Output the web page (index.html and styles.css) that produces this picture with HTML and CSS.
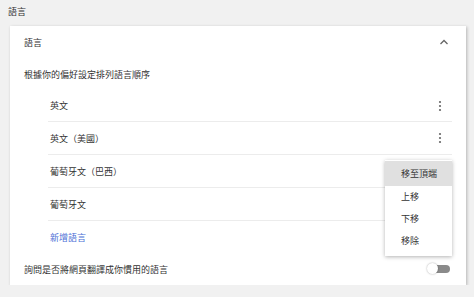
FILE: index.html
```html
<!DOCTYPE html>
<html lang="zh-Hant">
<head>
  <meta charset="UTF-8" />
  <meta name="viewport" content="width=device-width, initial-scale=1.0" />
  <title>語言</title>
  <link rel="stylesheet" href="styles.css">
</head>

<body>
  <div class="page-title">語言</div>

  <div class="card">
    <div class="card-header">
      <span>語言</span>
      <svg class="chevron" viewBox="0 0 10 6" width="10" height="6">
        <path d="M1.5 5 L5 1.5 L8.5 5" fill="none" stroke="#666" stroke-width="1.3"></path>
      </svg>
    </div>

    <div class="row">根據你的偏好設定排列語言順序</div>

    <ul class="lang-list">
      <li class="lang-item">
        <span>英文</span>
        <svg class="dots" viewBox="0 0 4 12" width="4" height="12">
          <circle cx="2" cy="2" r="1.1" fill="#666"></circle>
          <circle cx="2" cy="6" r="1.1" fill="#666"></circle>
          <circle cx="2" cy="10" r="1.1" fill="#666"></circle>
        </svg>
      </li>
      <li class="lang-item">
        <span>英文（美國）</span>
        <svg class="dots" viewBox="0 0 4 12" width="4" height="12">
          <circle cx="2" cy="2" r="1.1" fill="#666"></circle>
          <circle cx="2" cy="6" r="1.1" fill="#666"></circle>
          <circle cx="2" cy="10" r="1.1" fill="#666"></circle>
        </svg>
      </li>
      <li class="lang-item">
        <span>葡萄牙文（巴西）</span>
      </li>
      <li class="lang-item">
        <span>葡萄牙文</span>
      </li>
      <li class="lang-item add-lang">新增語言</li>
    </ul>

    <div class="row toggle-row">
      <span>詢問是否將網頁翻譯成你慣用的語言</span>
      <div class="toggle"><div class="knob"></div></div>
    </div>

    <div class="menu">
      <div class="menu-item active">移至頂端</div>
      <div class="menu-item">上移</div>
      <div class="menu-item">下移</div>
      <div class="menu-item">移除</div>
    </div>
  </div>
</body>
</html>
```

FILE: styles.css
```css
* {
  margin: 0;
  padding: 0;
  box-sizing: border-box;
}

body {
  font-family: "Noto Sans CJK TC", "Noto Sans", sans-serif;
  font-size: 9px;
  color: #333;
  background-color: #f1f1f1;
}

.page-title {
  height: 26px;
  line-height: 24px;
  padding-left: 8px;
}

.card {
  position: relative;
  margin: 0 8px 0 10px;
  background-color: #fff;
  box-shadow: 1px 1px 3px rgba(0, 0, 0, 0.25);
}

.card-header,
.row {
  height: 32px;
  padding: 0 17px 0 14px;
  display: flex;
  align-items: center;
  justify-content: space-between;
}

.chevron {
  margin-top: -1px;
}

.lang-list {
  list-style: none;
  margin: 0 14px 0 38px;
}

.lang-item {
  height: 33px;
  padding-left: 2px;
  padding-right: 10px;
  display: flex;
  align-items: center;
  justify-content: space-between;
  border-bottom: 1px solid #ececec;
}

.lang-item:first-child {
  height: 32px;
}

.add-lang {
  color: #4a6fd6;
  border-bottom: none;
  height: 32px;
}

.toggle-row {
  padding-right: 16px;
}

.toggle {
  position: relative;
  width: 20px;
  height: 8px;
  border-radius: 4px;
  background-color: #8a8a8a;
}

.knob {
  position: absolute;
  left: -3px;
  top: -2px;
  width: 11px;
  height: 11px;
  border-radius: 50%;
  background-color: #fff;
  box-shadow: 0 0 2px rgba(0, 0, 0, 0.35);
}

.menu {
  position: absolute;
  top: 134px;
  right: 14px;
  width: 67px;
  padding: 1px 0 4px;
  background-color: #fff;
  box-shadow: 0 1px 4px rgba(0, 0, 0, 0.3);
}

.menu-item {
  height: 22px;
  line-height: 22px;
  padding-left: 16px;
}

.menu-item.active {
  height: 25px;
  line-height: 25px;
  background-color: #e0e0e0;
}
```
